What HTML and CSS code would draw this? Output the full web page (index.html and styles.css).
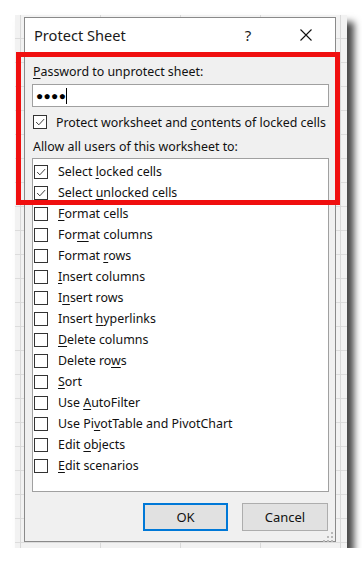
FILE: index.html
```html
<!DOCTYPE html>
<html>
<head>
<meta charset="utf-8">
<link rel="stylesheet" href="styles.css">
</head>
<body>
<div class="frame">
  <div class="dialog">
    <div class="titlebar">
      <span class="title">Protect Sheet</span>
      <span class="tb-help">?</span>
      <span class="tb-close">
        <svg width="12" height="12" viewBox="0 0 12 12"><path d="M0.5 0.5 L11.5 11.5 M11.5 0.5 L0.5 11.5" stroke="#111" stroke-width="1.1" fill="none"/></svg>
      </span>
    </div>
    <div class="body">
      <div class="label"><u>P</u>assword to unprotect sheet:</div>
      <div class="pwd"><span class="dots">●●●●</span><span class="caret"></span></div>
      <div class="chk-row top">
        <span class="box"><svg viewBox="0 0 14 14"><path d="M2.5 7 L5.6 10.3 L11.8 3.6" stroke="#333" stroke-width="1.1" fill="none"/></svg></span>
        <span>Protect worksheet and <u>c</u>ontents of locked cells</span>
      </div>
      <div class="label allow">Allow all users of this worksheet to:</div>
      <div class="listbox">
        <div class="item"><span class="box"><svg viewBox="0 0 14 14"><path d="M2.5 7 L5.6 10.3 L11.8 3.6" stroke="#333" stroke-width="1.1" fill="none"/></svg></span><span>Select <u>l</u>ocked cells</span></div>
        <div class="item"><span class="box"><svg viewBox="0 0 14 14"><path d="M2.5 7 L5.6 10.3 L11.8 3.6" stroke="#333" stroke-width="1.1" fill="none"/></svg></span><span>Select <u>u</u>nlocked cells</span></div>
        <div class="item"><span class="box"></span><span><u>F</u>ormat cells</span></div>
        <div class="item"><span class="box"></span><span>For<u>m</u>at columns</span></div>
        <div class="item"><span class="box"></span><span>Format <u>r</u>ows</span></div>
        <div class="item"><span class="box"></span><span><u>I</u>nsert columns</span></div>
        <div class="item"><span class="box"></span><span>I<u>n</u>sert rows</span></div>
        <div class="item"><span class="box"></span><span>Insert <u>h</u>yperlinks</span></div>
        <div class="item"><span class="box"></span><span><u>D</u>elete columns</span></div>
        <div class="item"><span class="box"></span><span>Delete ro<u>w</u>s</span></div>
        <div class="item"><span class="box"></span><span><u>S</u>ort</span></div>
        <div class="item"><span class="box"></span><span>Use <u>A</u>utoFilter</span></div>
        <div class="item"><span class="box"></span><span>Use Pi<u>v</u>otTable and PivotChart</span></div>
        <div class="item"><span class="box"></span><span>Edit <u>o</u>bjects</span></div>
        <div class="item"><span class="box"></span><span><u>E</u>dit scenarios</span></div>
      </div>
      <div class="buttons">
        <div class="btn default">OK</div>
        <div class="btn">Cancel</div>
      </div>
    </div>
    <div class="grip">
      <svg width="10" height="10" viewBox="0 0 10 10" fill="#b8b8b8">
        <rect x="8" y="0" width="2" height="2"/>
        <rect x="4" y="4" width="2" height="2"/><rect x="8" y="4" width="2" height="2"/>
        <rect x="0" y="8" width="2" height="2"/><rect x="4" y="8" width="2" height="2"/><rect x="8" y="8" width="2" height="2"/>
      </svg>
    </div>
  </div>
  <div class="redbox"></div>
</div>
</body>
</html>
```

FILE: styles.css
```css
html, body {
  margin: 0;
  padding: 0;
  background: #ffffff;
}
body {
  font-family: "Noto Sans", "Open Sans", sans-serif;
  font-size: 12.4px;
  color: #111;
}
u {
  text-decoration: underline;
  text-underline-offset: 2px;
  text-decoration-thickness: 1px;
}
.frame {
  position: relative;
  margin: 15px 0 0 15px;
  width: 332px;
  height: 533px;
  box-sizing: border-box;
  padding: 2px 0 0 9px;
  background-color: #f2f2f2;
  background-image:
    repeating-linear-gradient(to right, transparent 0, transparent 5px, #d9d9d9 5px, #d9d9d9 6px, transparent 6px, transparent 80px),
    repeating-linear-gradient(to bottom, transparent 0, transparent 23px, #dcdcdc 23px, #dcdcdc 24px);
  box-shadow: 7px 7px 7px rgba(0, 0, 0, 0.72);
}
.dialog {
  position: relative;
  width: 312px;
  height: 525px;
  box-sizing: border-box;
  border: 1px solid #8a8a8a;
  background: #f0f0f0;
  display: flex;
  flex-direction: column;
}
.titlebar {
  height: 34px;
  background: #ffffff;
  display: flex;
  align-items: center;
  flex-shrink: 0;
}
.title {
  padding-left: 9px;
  font-size: 14.6px;
  flex: 1;
  color: #1a1a1a;
}
.tb-help {
  width: 20px;
  font-size: 15px;
  text-align: center;
  margin-right: 42px;
  color: #1a1a1a;
}
.tb-close {
  width: 12px;
  height: 12px;
  margin-right: 23px;
  display: flex;
}
.body {
  padding: 12px 6px 0 7px;
  display: flex;
  flex-direction: column;
}
.label {
  line-height: 16px;
  padding-left: 1px;
}
.pwd {
  margin-top: 4px;
  height: 23px;
  box-sizing: border-box;
  border: 1px solid #a0a0a0;
  background: #fff;
  display: flex;
  align-items: center;
  padding-left: 3px;
}
.dots {
  font-size: 12px;
  letter-spacing: 0.3px;
  color: #000;
}
.caret {
  width: 1px;
  height: 16px;
  background: #000;
  margin-left: 0;
}
.chk-row {
  display: flex;
  align-items: center;
  height: 18px;
}
.chk-row.top {
  margin-top: 6px;
  padding-left: 1px;
  gap: 9px;
}
.box {
  width: 14px;
  height: 14px;
  box-sizing: border-box;
  border: 1px solid #333;
  background: #fff;
  flex-shrink: 0;
  display: flex;
}
.box svg {
  width: 12px;
  height: 12px;
}
.allow {
  margin-top: 8px;
}
.listbox {
  margin-top: 3px;
  height: 334px;
  box-sizing: border-box;
  border: 1px solid #a0a0a0;
  background: #fff;
  padding: 2px 0 0 1px;
}
.item {
  height: 21px;
  display: flex;
  align-items: center;
  gap: 10px;
}
.buttons {
  margin-top: 11px;
  display: flex;
  justify-content: flex-end;
  gap: 14px;
  padding-right: 1px;
}
.btn {
  width: 86px;
  height: 28px;
  box-sizing: border-box;
  border: 1px solid #adadad;
  background: #e1e1e1;
  display: flex;
  align-items: center;
  justify-content: center;
  font-size: 13px;
}
.btn.default {
  width: 85px;
  border: 2px solid #0078d7;
}
.grip {
  position: absolute;
  right: 2px;
  bottom: 2px;
  width: 10px;
  height: 10px;
}
.redbox {
  position: absolute;
  left: 1px;
  top: 37px;
  width: 324px;
  height: 153px;
  box-sizing: border-box;
  border: 5px solid #f00f0f;
}
```
